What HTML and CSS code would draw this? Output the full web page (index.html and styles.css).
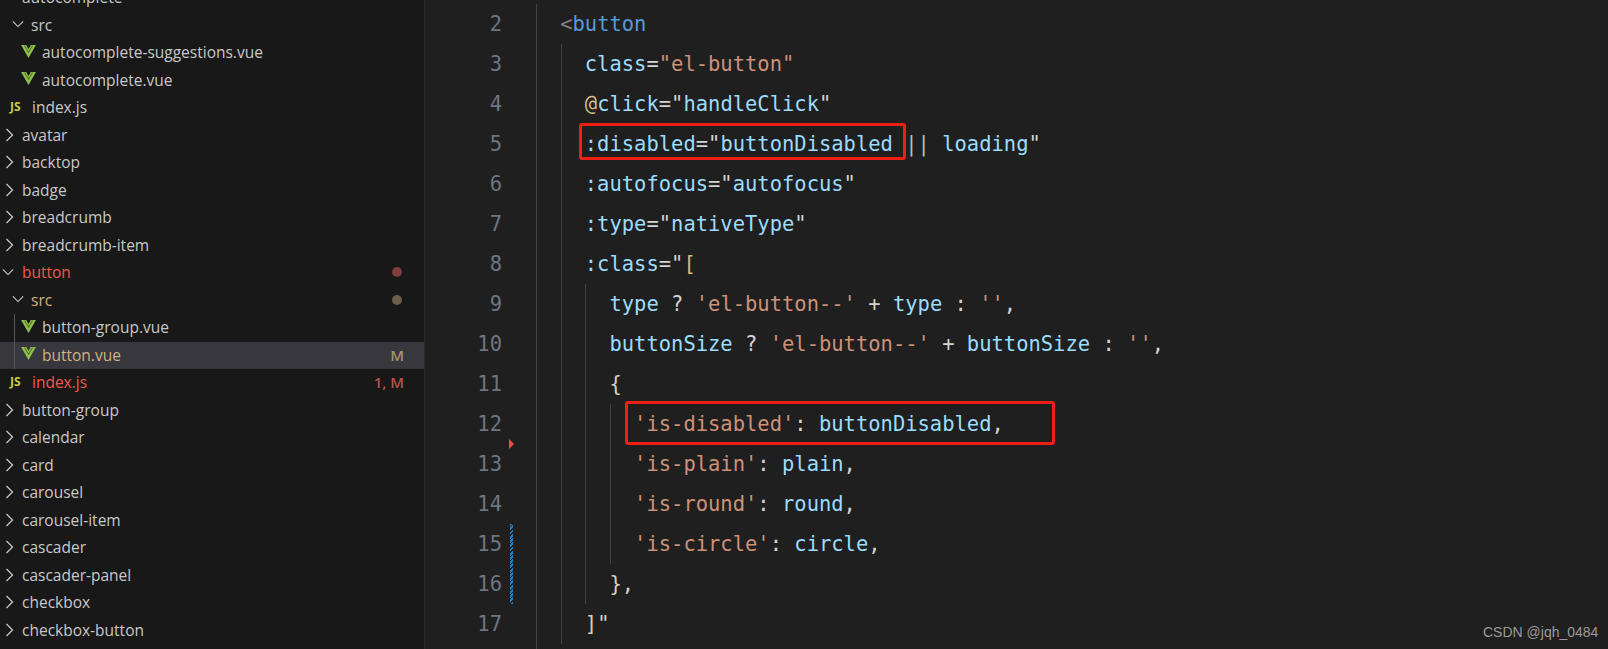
FILE: index.html
```html
<!DOCTYPE html>
<html lang="en">
<head>
<meta charset="utf-8">
<title>button.vue</title>
<link rel="stylesheet" href="styles.css">
</head>
<body>
<svg class="defs" width="0" height="0" aria-hidden="true">
  <symbol id="closed" viewBox="0 0 9 14"><path d="M1.5 1 7.500 7 1.500 13" fill="none" stroke="currentColor" stroke-width="1.3"/></symbol>
  <symbol id="open" viewBox="0 0 14 9"><path d="M1 1.500 7 7.500 13 1.500" fill="none" stroke="currentColor" stroke-width="1.3"/></symbol>
  <symbol id="vue" viewBox="0 0 16 14"><path d="M0 0H5.500L8 4.200 10.500 0H16L8 14Z" fill="#8dc149"/><path d="M3.600 .5 8 7.800 12.400 .5" fill="none" stroke="#55752f" stroke-width="1.100"/></symbol>
</svg>
<div class="app">
  <aside class="sidebar">
    <ul class="tree">
      <li class="row d0"><svg class="chev-open"><use href="#open"/></svg><span>autocomplete</span></li>
      <li class="row d1"><svg class="chev-open"><use href="#open"/></svg><span>src</span></li>
      <li class="row d2"><svg class="vue"><use href="#vue"/></svg><span>autocomplete-suggestions.vue</span></li>
      <li class="row d2"><svg class="vue"><use href="#vue"/></svg><span>autocomplete.vue</span></li>
      <li class="row d1f"><b class="js">JS</b><span>index.js</span></li>
      <li class="row d0"><svg class="chev"><use href="#closed"/></svg><span>avatar</span></li>
      <li class="row d0"><svg class="chev"><use href="#closed"/></svg><span>backtop</span></li>
      <li class="row d0"><svg class="chev"><use href="#closed"/></svg><span>badge</span></li>
      <li class="row d0"><svg class="chev"><use href="#closed"/></svg><span>breadcrumb</span></li>
      <li class="row d0"><svg class="chev"><use href="#closed"/></svg><span>breadcrumb-item</span></li>
      <li class="row d0 err"><svg class="chev-open"><use href="#open"/></svg><span>button</span><i class="dot dot-err"></i></li>
      <li class="row d1 mod"><svg class="chev-open"><use href="#open"/></svg><span>src</span><i class="dot dot-mod"></i></li>
      <li class="row d2 guide"><svg class="vue"><use href="#vue"/></svg><span>button-group.vue</span></li>
      <li class="row d2 guide selected mod"><svg class="vue"><use href="#vue"/></svg><span>button.vue</span><em class="badge badge-mod">M</em></li>
      <li class="row d1f err"><b class="js">JS</b><span>index.js</span><em class="badge badge-err">1, M</em></li>
      <li class="row d0"><svg class="chev"><use href="#closed"/></svg><span>button-group</span></li>
      <li class="row d0"><svg class="chev"><use href="#closed"/></svg><span>calendar</span></li>
      <li class="row d0"><svg class="chev"><use href="#closed"/></svg><span>card</span></li>
      <li class="row d0"><svg class="chev"><use href="#closed"/></svg><span>carousel</span></li>
      <li class="row d0"><svg class="chev"><use href="#closed"/></svg><span>carousel-item</span></li>
      <li class="row d0"><svg class="chev"><use href="#closed"/></svg><span>cascader</span></li>
      <li class="row d0"><svg class="chev"><use href="#closed"/></svg><span>cascader-panel</span></li>
      <li class="row d0"><svg class="chev"><use href="#closed"/></svg><span>checkbox</span></li>
      <li class="row d0"><svg class="chev"><use href="#closed"/></svg><span>checkbox-button</span></li>
    </ul>
  </aside>
  <main class="editor">
    <div class="line"><span class="ln">2</span><code class="code">  <span class="br">&lt;</span><span class="tag">button</span></code></div>
    <div class="line"><span class="ln">3</span><code class="code">    <span class="at">class</span><span class="pu">=</span><span class="st">"el-button"</span></code></div>
    <div class="line"><span class="ln">4</span><code class="code">    <span class="go">@</span><span class="at">click</span><span class="pu">="</span><span class="at">handleClick</span><span class="pu">"</span></code></div>
    <div class="line"><span class="ln">5</span><code class="code">    <span class="at">:disabled</span><span class="pu">="</span><span class="at">buttonDisabled</span> <span class="pipe">||</span> <span class="at">loading</span><span class="pu">"</span></code></div>
    <div class="line"><span class="ln">6</span><code class="code">    <span class="at">:autofocus</span><span class="pu">="</span><span class="at">autofocus</span><span class="pu">"</span></code></div>
    <div class="line"><span class="ln">7</span><code class="code">    <span class="at">:type</span><span class="pu">="</span><span class="at">nativeType</span><span class="pu">"</span></code></div>
    <div class="line"><span class="ln">8</span><code class="code">    <span class="at">:class</span><span class="pu">="</span><span class="go">[</span></code></div>
    <div class="line"><span class="ln">9</span><code class="code">      <span class="at">type</span> <span class="pu">?</span> <span class="st">'el-button--'</span> <span class="pu">+</span> <span class="at">type</span> <span class="pu">:</span> <span class="st">''</span><span class="pu">,</span></code></div>
    <div class="line"><span class="ln">10</span><code class="code">      <span class="at">buttonSize</span> <span class="pu">?</span> <span class="st">'el-button--'</span> <span class="pu">+</span> <span class="at">buttonSize</span> <span class="pu">:</span> <span class="st">''</span><span class="pu">,</span></code></div>
    <div class="line"><span class="ln">11</span><code class="code">      <span class="lt">{</span></code></div>
    <div class="line"><span class="ln">12</span><code class="code">        <span class="st">'is-disabled'</span><span class="pu">:</span> <span class="at">buttonDisabled</span><span class="pu">,</span></code></div>
    <div class="line"><span class="ln">13</span><code class="code">        <span class="st">'is-plain'</span><span class="pu">:</span> <span class="at">plain</span><span class="pu">,</span></code></div>
    <div class="line"><span class="ln">14</span><code class="code">        <span class="st">'is-round'</span><span class="pu">:</span> <span class="at">round</span><span class="pu">,</span></code></div>
    <div class="line"><span class="ln">15</span><code class="code">        <span class="st">'is-circle'</span><span class="pu">:</span> <span class="at">circle</span><span class="pu">,</span></code></div>
    <div class="line"><span class="ln">16</span><code class="code">      <span class="lt">}</span><span class="pu">,</span></code></div>
    <div class="line"><span class="ln">17</span><code class="code">    <span class="lt">]</span><span class="pu">"</span></code></div>
    <i class="iguide g0"></i>
    <i class="iguide g1"></i>
    <i class="iguide g2"></i>
    <i class="iguide g3"></i>
    <i class="dirty"></i>
    <i class="marker"></i>
    <i class="callout c1"></i>
    <i class="callout c2"></i>
    <div class="watermark">CSDN @jqh_0484</div>
  </main>
</div>
</body>
</html>
```

FILE: styles.css
```css
* { box-sizing: border-box; }
html, body { margin: 0; height: 100%; overflow: hidden; background: #1f1f1f; }
.defs { position: absolute; }
.app { display: flex; height: 649px; overflow: hidden; }

.sidebar { flex: 0 0 425px; background: #181818; border-right: 1px solid #2b2b2b; overflow: hidden; font: 15.5px/27.5px "Open Sans", "Noto Sans", sans-serif; color: #c8c8c8; }
.tree { list-style: none; margin: -16px 0 0; padding: 0; }
.row { position: relative; display: flex; align-items: center; height: 27.5px; white-space: nowrap; }
.row.d0 { padding-left: 5px; }
.row.d1 { padding-left: 12px; }
.row.d1f { padding-left: 10px; }
.row.d2 { padding-left: 21px; }
.row span { line-height: 27.5px; }
.chev { width: 9px; height: 14px; margin-right: 8px; margin-top: -1px; color: #c8c8c8; flex: none; }
.chev-open { width: 12px; height: 8px; margin-right: 7px; margin-top: -2px; color: #c8c8c8; flex: none; }
.d0 .chev-open { margin-left: -3px; margin-right: 8px; }
.vue { width: 15px; height: 13px; margin-right: 6px; margin-top: -3px; flex: none; }
.js { width: 13px; margin-right: 9px; margin-top: -3px; font: bold 12px/13px "Open Sans", sans-serif; color: #cbcb41; flex: none; }
.err > span { color: #f0574c; }
.mod > span { color: #d2b27e; }
.selected { background: #37373d; }
.guide::before { content: ""; position: absolute; left: 14px; top: 0; bottom: 0; width: 1px; background: #58585a; }
.dot { position: absolute; right: 22px; top: 8px; width: 10px; height: 10px; border-radius: 50%; }
.dot-err { background: #7f3f3a; }
.dot-mod { background: #6c5f49; }
.badge { position: absolute; right: 20px; top: 0; font: normal 600 15px/26px "Open Sans", sans-serif; }
.badge-mod { color: #a6946c; }
.badge-err { color: #b3524a; }

.editor { position: relative; flex: 1; padding-top: 4px; background: #1f1f1f; overflow: hidden; }
.line { display: flex; height: 40px; font: 20.48px/40px "DejaVu Sans Mono", "Liberation Mono", monospace; }
.ln { flex: none; width: 77px; text-align: right; color: #6e7681; }
.code { flex: none; margin-left: 33.5px; font: inherit; white-space: pre; }
.at { color: #9cdcfe; }
.st { color: #ce9178; }
.tag { color: #569cd6; }
.br { color: #808080; }
.pu { color: #d4d4d4; }
.go { color: #d7ba7d; }
.lt { color: #d8cfb8; }
.pipe { color: #b9bdb0; }

.iguide { position: absolute; width: 1px; background: #404040; }
.g0 { left: 111px; top: 4px; bottom: 0; }
.g1 { left: 136px; top: 44px; height: 600px; }
.g2 { left: 160px; top: 284px; height: 320px; }
.g3 { left: 185px; top: 404px; height: 160px; }
.dirty { position: absolute; left: 85px; top: 524px; width: 3px; height: 80px; background: repeating-linear-gradient(-45deg, #1a7fc4 0 2px, #1f1f1f 2px 3px); }
.marker { position: absolute; left: 84px; top: 439px; border-left: 5px solid #f14c4c; border-top: 5px solid transparent; border-bottom: 5px solid transparent; }
.callout { position: absolute; border: 3px solid #f01f14; border-radius: 3px; }
.c1 { left: 154px; top: 123px; width: 327px; height: 37px; }
.c2 { left: 200px; top: 401px; width: 430px; height: 44px; }
.watermark { position: absolute; left: 1058px; top: 623px; font: 14px/18px "Liberation Sans", sans-serif; color: #9a9a9a; white-space: nowrap; }
```
